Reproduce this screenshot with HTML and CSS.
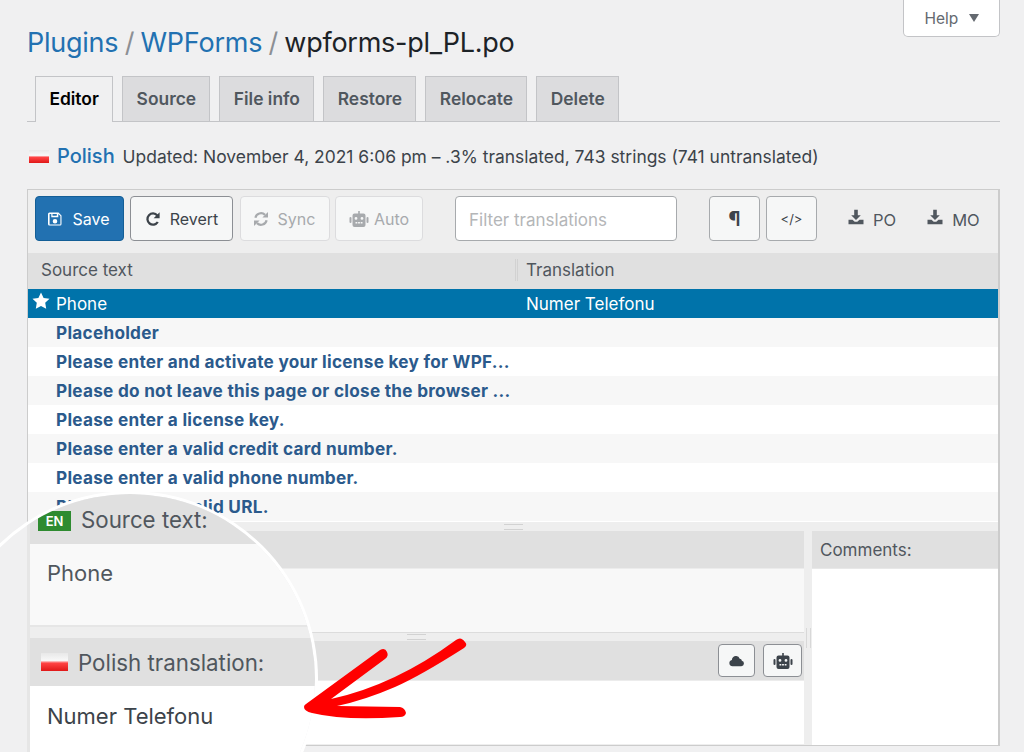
FILE: index.html
```html
<!DOCTYPE html>
<html lang="en">
<head>
  <meta charset="UTF-8" />
  <title>Edit wpforms-pl_PL.po</title>
  <link rel="stylesheet" href="styles.css">
</head>
<body>
  <svg class="icon-defs" aria-hidden="true">
    <symbol id="i-save" viewBox="0 0 16 16"><path fill-rule="evenodd" d="M2.5 1.5h9l3 3v8.500a1.500 1.500 0 0 1-1.500 1.500h-10.500a1.500 1.500 0 0 1-1.500-1.500v-10a1.500 1.500 0 0 1 1.500-1.500zM2.600 3v10.400h10.800v-8.300l-2.100-2.100v3.300h-7v-3.300zM5.500 3v1.800h4.300v-1.800zM8 8a2.300 2.300 0 1 1 0 4.600 2.300 2.300 0 0 1 0-4.600z"/></symbol>
    <symbol id="i-redo" viewBox="0 0 16 16"><path fill="none" stroke="currentColor" stroke-width="2.300" d="M12.800 11A5.600 5.600 0 1 1 12.300 4.400"/><path d="M14.600 1.200v6h-6z"/></symbol>
    <symbol id="i-sync" viewBox="0 0 16 16"><path fill="none" stroke="currentColor" stroke-width="2.200" d="M2.400 6.800A5.700 5.700 0 0 1 12 3.900M13.600 9.200A5.700 5.700 0 0 1 4 12.100"/><path d="M15 .9v5.600h-5.600zM1 15.100v-5.600h5.600z"/></symbol>
    <symbol id="i-robot" viewBox="0 0 20 16"><path fill-rule="evenodd" d="M9.200 0h1.600v2.600h3.700a2 2 0 0 1 2 2v9.400a2 2 0 0 1-2 2h-9a2 2 0 0 1-2-2v-9.400a2 2 0 0 1 2-2h3.700zM7 6a1.400 1.400 0 1 0 0 2.800 1.400 1.400 0 0 0 0-2.800zM13 6a1.400 1.400 0 1 0 0 2.800 1.400 1.400 0 0 0 0-2.800zM6.500 11v1.400h1.800v-1.400zM9.100 11v1.400h1.800v-1.400zM11.700 11v1.400h1.800v-1.400z"/><rect x="0.500" y="6" width="2" height="6" rx="1"/><rect x="17.500" y="6" width="2" height="6" rx="1"/></symbol>
    <symbol id="i-down" viewBox="0 0 16 16"><path d="M6.200 .8h3.600v5.400h3l-4.800 4.800-4.800-4.800h3z"/><path d="M.5 10.800h4l2.200 2h2.600l2.200-2h4v4.400h-15z"/></symbol>
    <symbol id="i-cloud" viewBox="0 0 20 16"><path d="M4.600 14.500a4 4 0 0 1-1-7.900 4.800 4.800 0 0 1 5.600-4.700 5 5 0 0 1 4.200 3.400 3 3 0 0 1 2.700 2.500 3.400 3.400 0 0 1-.7 6.700z"/></symbol>
    <symbol id="i-star" viewBox="0 0 18 17"><path d="M9 .5l2.600 5.400 5.900.8-4.300 4.100 1 5.900-5.200-2.800-5.200 2.800 1-5.900-4.300-4.100 5.900-.8z"/></symbol>
  </svg>

  <div class="wrap">
    <a class="help-tab">Help <span class="help-caret"></span></a>
    <h1 class="crumbs"><a>Plugins</a> <span>/</span> <a>WPForms</a> <span>/</span> wpforms-pl_PL.po</h1>

    <nav class="tabs">
      <a class="tab active">Editor</a>
      <a class="tab">Source</a>
      <a class="tab">File info</a>
      <a class="tab">Restore</a>
      <a class="tab">Relocate</a>
      <a class="tab">Delete</a>
    </nav>

    <p class="status"><span class="flag"></span><a class="status-lang">Polish</a> Updated: November 4, 2021 6:06 pm – .3% translated, 743 strings (741 untranslated)</p>

    <div class="editor">
      <div class="toolbar">
        <button class="btn btn-save"><svg class="ico"><use href="#i-save"/></svg>Save</button>
        <button class="btn btn-revert"><svg class="ico"><use href="#i-redo"/></svg>Revert</button>
        <button class="btn btn-sync off"><svg class="ico"><use href="#i-sync"/></svg>Sync</button>
        <button class="btn btn-auto off"><svg class="ico ico-wide"><use href="#i-robot"/></svg>Auto</button>
        <div class="filter">Filter translations</div>
        <button class="btn btn-square btn-para">¶</button>
        <button class="btn btn-square btn-code">&lt;/&gt;</button>
        <a class="dl dl-po"><svg class="ico"><use href="#i-down"/></svg>PO</a>
        <a class="dl dl-mo"><svg class="ico"><use href="#i-down"/></svg>MO</a>
      </div>

      <div class="list-head">
        <div class="col-src">Source text</div>
        <div class="col-sep"></div>
        <div class="col-tr">Translation</div>
      </div>
      <div class="row selected">
        <svg class="star"><use href="#i-star"/></svg>
        <div class="col-src">Phone</div>
        <div class="col-tr">Numer Telefonu</div>
      </div>
      <div class="row odd"><div class="col-src">Placeholder</div></div>
      <div class="row"><div class="col-src">Please enter and activate your license key for WPF...</div></div>
      <div class="row odd"><div class="col-src">Please do not leave this page or close the browser ...</div></div>
      <div class="row"><div class="col-src">Please enter a license key.</div></div>
      <div class="row odd"><div class="col-src">Please enter a valid credit card number.</div></div>
      <div class="row"><div class="col-src">Please enter a valid phone number.</div></div>
      <div class="row odd"><div class="col-src">Please enter a valid URL.</div></div>

      <div class="split-h"><span class="grip"></span></div>

      <div class="lower">
        <div class="lower-main">
          <div class="pane-head"></div>
          <div class="pane-body source"></div>
          <div class="split-h split-inner"><span class="grip"></span></div>
          <div class="pane-head pane-head-tools">
            <button class="btn mini"><svg class="ico"><use href="#i-cloud"/></svg></button>
            <button class="btn mini mini-bot"><svg class="ico ico-wide"><use href="#i-robot"/></svg></button>
          </div>
          <div class="pane-body target"></div>
        </div>
        <div class="split-v"><span class="grip-v"></span></div>
        <div class="lower-side">
          <div class="pane-head side-head">Comments:</div>
          <div class="side-body"></div>
        </div>
      </div>
    </div>
  </div>

  <!-- magnified callout over the lower panes -->
  <div class="lens">
    <div class="lens-inner">
      <div class="lens-panel">
        <div class="lens-head lens-head-first"><span class="badge">EN</span>Source text:</div>
        <div class="lens-body lens-source">Phone</div>
        <div class="lens-gap"></div>
        <div class="lens-head lens-head-tr"><span class="flag flag-big"></span>Polish translation:</div>
        <div class="lens-body lens-target">Numer Telefonu</div>
      </div>
    </div>
  </div>

  <svg class="arrow" viewBox="300 635 170 90">
    <path d="M306 704L380 650Q385 647 387 652Q389 656 385 659L331 699Q395 685 456 640Q461 636 465 642Q468 645 464 648Q420 676 395 687Q365 700 337 706L400 707Q405 708 406 713Q405 717 400 717Q345 721 312 713Q304 711 304 707Q304 705 306 704Z"/>
  </svg>
</body>
</html>
```

FILE: styles.css
```css
html, body {
  height: 100%;
  overflow: hidden;
}
body {
  margin: 0;
  background: #f0f0f1;
  color: #3c434a;
  font-family: Inter, "Liberation Sans", sans-serif;
  font-size: 17px;
  position: relative;
}
.icon-defs {
  display: none;
}
.wrap {
  padding: 0 24px 0 27px;
}
.ico {
  width: 16px;
  height: 16px;
  fill: currentColor;
  flex: none;
}
.ico-wide {
  width: 20px;
}

/* header */
.help-tab {
  float: right;
  box-sizing: border-box;
  width: 97px;
  height: 37px;
  margin: 0 0 0 10px;
  padding-top: 9px;
  background: #fff;
  border: 1px solid #c3c4c7;
  border-top: none;
  border-radius: 0 0 5px 5px;
  color: #646970;
  font-size: 15.500px;
  text-align: center;
}
.help-caret {
  display: inline-block;
  margin-left: 6px;
  vertical-align: 2px;
  border-left: 5px solid transparent;
  border-right: 5px solid transparent;
  border-top: 8px solid #646970;
}
.crumbs {
  margin: 0;
  padding-top: 26px;
  font-size: 27px;
  font-weight: 400;
  line-height: 34px;
  letter-spacing: -0.25px;
  word-spacing: -1px;
  color: #1d2327;
}
.crumbs a {
  color: #2271b1;
}
.crumbs span {
  color: #8c8f94;
}

/* tabs */
.tabs {
  display: flex;
  gap: 9px;
  height: 45px;
  margin-top: 16px;
  padding-left: 8px;
  border-bottom: 1px solid #c3c4c7;
}
.tab {
  box-sizing: border-box;
  height: 45px;
  padding: 11px 13.400px 0;
  background: #dcdcde;
  border: 1px solid #c3c4c7;
  border-bottom: none;
  color: #50575e;
  font-size: 17.400px;
  font-weight: 600;
}
.tab.active {
  height: 46px;
  background: #f0f0f1;
  color: #000;
}

/* status line */
.status {
  display: flex;
  align-items: center;
  margin: 20px 0 0 2px;
  height: 28px;
  font-size: 17.450px;
  white-space: pre;
  color: #3c434a;
}
.flag {
  display: inline-block;
  width: 20px;
  height: 13px;
  margin-right: 8px;
  background: linear-gradient(#e8e8e8, #f8f8f8 42%, #f44 56%, #e01818);
}
.status-lang {
  margin-right: 3px;
  color: #2271b1;
  font-size: 20px;
  font-weight: 500;
}

/* editor box */
.editor {
  box-sizing: border-box;
  height: 557px;
  margin-top: 19px;
  background: #eee;
  border: 1px solid #ccc;
  border-right-width: 2px;
}
.toolbar {
  display: flex;
  align-items: flex-start;
  height: 63px;
  padding: 6px 0 0 7px;
  box-sizing: border-box;
}
.btn {
  box-sizing: border-box;
  display: inline-flex;
  align-items: center;
  justify-content: center;
  height: 45px;
  padding: 1px 0 0;
  gap: 9px;
  background: #f6f7f7;
  border: 1px solid #8c8f94;
  border-radius: 4px;
  color: #3c434a;
  font-family: inherit;
  font-size: 16px;
}
.btn .ico {
  margin-top: -1px;
}
.btn-save {
  width: 89px;
  padding-right: 2px;
  background: #2271b1;
  border-color: #135e96;
  color: #fff;
}
.btn-revert {
  width: 103px;
  margin-left: 6px;
}
.btn-sync {
  width: 90px;
  padding-right: 2px;
  margin-left: 7px;
}
.btn-auto {
  width: 88px;
  margin-left: 5px;
  gap: 5px;
}
.btn.off {
  border-color: #dcdcde;
  color: #a7aaad;
}
.filter {
  box-sizing: border-box;
  width: 222px;
  height: 45px;
  margin-left: 32px;
  padding: 13px 13px;
  background: #fff;
  border: 1px solid #a7aaad;
  border-radius: 4px;
  color: #b4b6b8;
  font-size: 17px;
}
.btn-square {
  width: 51px;
  border-color: #a7aaad;
}
.btn-para {
  margin-left: 32px;
  font-size: 20px;
  font-weight: 700;
}
.btn-code {
  margin-left: 6px;
  font-size: 13px;
}
.dl {
  display: flex;
  align-items: center;
  gap: 9px;
  height: 47px;
  color: #50575e;
  font-size: 16.500px;
}
.dl .ico {
  margin-top: -5px;
}
.dl-po {
  margin-left: 31px;
}
.dl-mo {
  margin-left: 31px;
}

/* string list */
.list-head {
  display: flex;
  align-items: center;
  height: 36px;
  padding-bottom: 2px;
  box-sizing: border-box;
  background: #e0e0e0;
  color: #50575e;
}
.list-head .col-src {
  width: 487px;
  padding-left: 13px;
  box-sizing: border-box;
}
.col-sep {
  width: 3px;
  height: 22px;
  border-left: 1px solid #d2d2d2;
  border-right: 1px solid #d2d2d2;
  box-sizing: border-box;
}
.list-head .col-tr {
  margin-left: 8px;
}
.row {
  position: relative;
  display: flex;
  align-items: center;
  height: 29px;
  background: #fff;
  color: #2b5a8c;
  font-size: 17.200px;
  font-weight: 700;
  letter-spacing: 0.26px;
  white-space: nowrap;
}
.row.odd {
  background: #f7f7f7;
}
.row .col-src {
  width: 498px;
  padding-left: 28px;
  box-sizing: border-box;
}
.row.selected {
  background: #0073aa;
  color: #fff;
  font-size: 17px;
  font-weight: 400;
  letter-spacing: 0;
}
.star {
  position: absolute;
  left: 4px;
  top: 3px;
  width: 18px;
  height: 17px;
  fill: #fff;
}

/* lower panes */
.split-h {
  display: flex;
  justify-content: center;
  align-items: center;
  height: 10px;
  border-top: 1px solid #fff;
  box-sizing: border-box;
}
.split-inner {
  height: 9px;
  border-top: 1px solid #dcdcdc;
}
.grip {
  width: 19px;
  height: 4px;
  border-top: 1px solid #d2d2d2;
  border-bottom: 1px solid #d2d2d2;
}
.lower {
  display: flex;
  height: 214px;
}
.lower-main {
  width: 776px;
}
.split-v {
  display: flex;
  align-items: center;
  justify-content: center;
  width: 8px;
}
.grip-v {
  width: 3px;
  height: 20px;
  border-left: 1px solid #d8d8d8;
  border-right: 1px solid #d8d8d8;
}
.lower-side {
  flex: 1;
}
.pane-head {
  box-sizing: border-box;
  height: 37px;
  background: #e0e0e0;
  color: #50575e;
}
.pane-head-tools {
  display: flex;
  justify-content: flex-end;
  align-items: center;
  gap: 8px;
  height: 39px;
  padding-right: 2px;
}
.mini {
  width: 37px;
  height: 33px;
}
.mini-bot {
  width: 39px;
}
.side-head {
  padding: 9px 8px;
}
.side-body {
  height: 177px;
  background: #fff;
  border-top: 1px solid #e8e8e8;
  box-sizing: border-box;
}
.pane-body {
  height: 64px;
  box-sizing: border-box;
}
.pane-body.source {
  background: #f8f8f8;
  border-top: 1px solid #ececec;
}
.pane-body.target {
  background: #fff;
  border-top: 1px solid #ececec;
}

/* magnifier, clipped to a circle of 188px centred at 130,679 */
.lens {
  position: absolute;
  left: 0;
  top: 491px;
  width: 320px;
  height: 261px;
  background: #fff;
  clip-path: circle(188px at 130px 188px);
  color: #50575e;
  font-size: 22.300px;
}
.lens-inner {
  box-sizing: border-box;
  height: 100%;
  padding: 3px 0 0 27px;
  background: #f0f0f1;
  clip-path: circle(185px at 130px 188px);
}
.lens-panel {
  border-left: 3px solid #e6e6e6;
}
.lens-head {
  display: flex;
  align-items: center;
  box-sizing: border-box;
  background: #e0e0e0;
}
.lens-head-first {
  height: 50px;
  padding-left: 8px;
}
.lens-head-tr {
  height: 48px;
  padding-left: 11px;
}
.lens-body {
  box-sizing: border-box;
  padding: 16px 0 0 17px;
  font-size: 22px;
  line-height: 26px;
}
.lens-source {
  height: 83px;
  background: #f9f9f9;
  border-bottom: 2px solid #e6e6e6;
}
.lens-gap {
  height: 11px;
  background: #eee;
}
.lens-target {
  height: 66px;
  padding-top: 17px;
  background: #fff;
  color: #3c434a;
}
.badge {
  width: 33px;
  height: 20px;
  margin: 4px 10px 0 0;
  background: #2e8b30;
  color: #fff;
  font-size: 13px;
  font-weight: 600;
  line-height: 20px;
  text-align: center;
}
.flag-big {
  width: 27px;
  height: 18px;
  margin-right: 10px;
}

/* hand drawn arrow */
.arrow {
  position: absolute;
  left: 300px;
  top: 635px;
  width: 170px;
  height: 90px;
  fill: #f00;
}
```
